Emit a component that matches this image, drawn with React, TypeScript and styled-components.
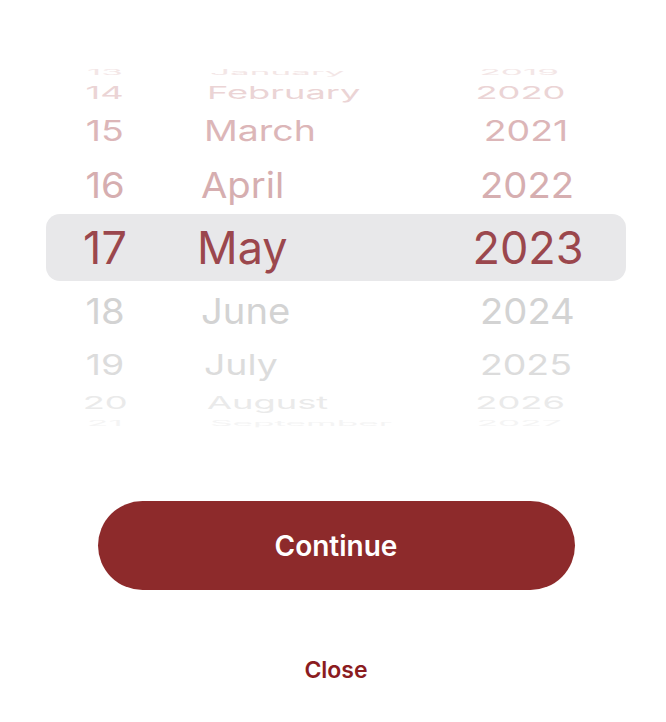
import React from "react";
import styled, { createGlobalStyle } from "styled-components";

const GlobalStyle = createGlobalStyle`
  html, body {
    margin: 0;
    padding: 0;
    background: #ffffff;
  }
  body {
    font-family: Inter, "Noto Sans", "Liberation Sans", sans-serif;
    -webkit-font-smoothing: antialiased;
  }
`;

const days = [13, 14, 15, 16, 17, 18, 19, 20, 21];
const months = ["January", "February", "March", "April", "May", "June", "July", "August", "September"];
const years = [2019, 2020, 2021, 2022, 2023, 2024, 2025, 2026, 2027];
const selected = 4;

// projected row heights / squash per distance from the selected row (wheel look)
const rowHeight = [67, 59, 49, 27, 14];
const squash = [1, 0.92, 0.73, 0.45, 0.18];
const narrow = [1, 0.98, 0.96, 0.93, 0.9];
const monthShift = [0, 4, 7, 10, 13];
const yearShift = [0, -1, -2, -8, -9];

const inkAbove = ["#9b474d", "#d6aeb0", "#dcb6b8", "#ebd4d5", "#f3e6e6"];
const inkBelow = ["#9b474d", "#d3d3d3", "#dcdcdc", "#eaeaea", "#f4f4f4"];

const Screen = styled.main`
  width: 666px;
  height: 722px;
  box-sizing: border-box;
  padding: 65px 40px 0 46px;
  display: flex;
  flex-direction: column;
  align-items: center;
`;

const Wheel = styled.section`
  width: 100%;
  display: flex;
  flex-direction: column;
  overflow: hidden;
`;

const WheelRow = styled.div<{ $dist: number; $offset: number }>`
  height: ${p => rowHeight[p.$dist]}px;
  flex: none;
  display: grid;
  grid-template-columns: 118px 1fr 196px;
  align-items: stretch;
  border-radius: 14px;
  background: ${p => (p.$dist === 0 ? "#e8e8ea" : "transparent")};
  color: ${p => (p.$offset < 0 ? inkAbove[p.$dist] : inkBelow[p.$dist])};
  font-size: ${p => (p.$dist === 0 ? 45 : 39)}px;
  font-weight: 400;
  line-height: 1;
  white-space: nowrap;
`;

const DayCell = styled.div`
  display: flex;
  align-items: center;
  justify-content: center;
  min-height: 0;
`;

const MonthCell = styled.div<{ $shift: number }>`
  display: flex;
  align-items: center;
  justify-content: flex-start;
  min-height: 0;
  padding-left: 33px;
  transform: translateX(${p => p.$shift}px);
`;

const YearCell = styled.div<{ $shift: number }>`
  display: flex;
  align-items: center;
  justify-content: center;
  min-height: 0;
  transform: translateX(${p => p.$shift}px);
`;

const Label = styled.span<{ $dist: number; $origin?: string }>`
  display: inline-block;
  flex: none;
  transform: scale(${p => narrow[p.$dist]}, ${p => squash[p.$dist]});
  transform-origin: ${p => p.$origin ?? "center"};
`;

const PrimaryButton = styled.button`
  margin-top: 71px;
  width: 477px;
  height: 89px;
  flex: none;
  border: none;
  border-radius: 45px;
  background: #8d2a2b;
  color: #ffffff;
  font-family: inherit;
  font-size: 28px;
  font-weight: 600;
  cursor: pointer;
`;

const LinkButton = styled.button`
  margin-top: 66px;
  border: none;
  background: none;
  padding: 0;
  color: #8b1c1f;
  font-family: inherit;
  font-size: 23px;
  line-height: 28px;
  font-weight: 600;
  cursor: pointer;
`;

export default function App() {
  return (
    <>
      <GlobalStyle />
      <Screen>
        <Wheel>
          {days.map((day, i) => {
            const offset = i - selected;
            const dist = Math.abs(offset);
            return (
              <WheelRow key={day} $dist={dist} $offset={offset}>
                <DayCell>
                  <Label $dist={dist}>{day}</Label>
                </DayCell>
                <MonthCell $shift={monthShift[dist]}>
                  <Label $dist={dist} $origin="left center">{months[i]}</Label>
                </MonthCell>
                <YearCell $shift={yearShift[dist]}>
                  <Label $dist={dist}>{years[i]}</Label>
                </YearCell>
              </WheelRow>
            );
          })}
        </Wheel>
        <PrimaryButton>Continue</PrimaryButton>
        <LinkButton>Close</LinkButton>
      </Screen>
    </>
  );
}
